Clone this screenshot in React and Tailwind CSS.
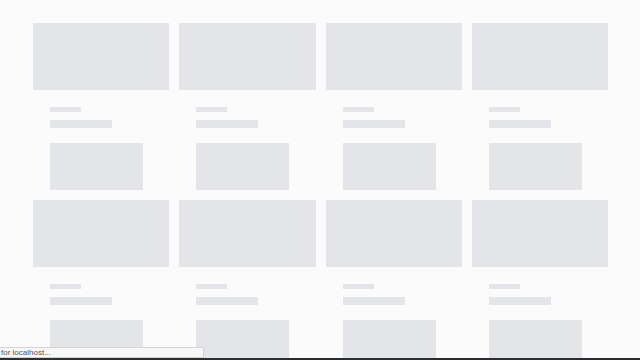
import React from "react";

const SkeletonCard = () => {
  return (
    <div className="flex flex-col">
      <div className="h-[67px] w-full bg-[#e4e5e8]" />
      <div className="flex flex-col pl-[17px]">
        <div className="mt-[17px] h-[5px] w-[31px] bg-[#e4e5e8]" />
        <div className="mt-[8px] h-[8px] w-[62px] bg-[#e4e5e8]" />
        <div className="mt-[15px] h-[47px] w-[93px] bg-[#e4e5e8]" />
      </div>
    </div>
  );
};

const App = () => {
  const cards = Array.from({ length: 8 });
  return (
    <div className="relative h-[360px] w-[640px] overflow-hidden bg-[#fbfbfb] font-['Liberation_Sans',sans-serif]">
      <div className="grid grid-cols-4 gap-x-[10px] gap-y-[10px] pl-[33px] pr-[32px] pt-[23px]">
        {cards.map((_, i) => (
          <SkeletonCard key={`card-${i}`} />
        ))}
      </div>
      <div className="absolute bottom-[2px] left-0 flex h-[11px] w-[204px] items-center rounded-tr-[2px] border border-l-0 border-[#d4d4d4] bg-[#f7f7f7] text-[8px] leading-none text-[#555]">
        <span className="pl-[1px]">for localhost...</span>
      </div>
      <div className="absolute bottom-0 left-0 h-[2px] w-full bg-[#2b2e2f]" />
    </div>
  );
};

export default App;
